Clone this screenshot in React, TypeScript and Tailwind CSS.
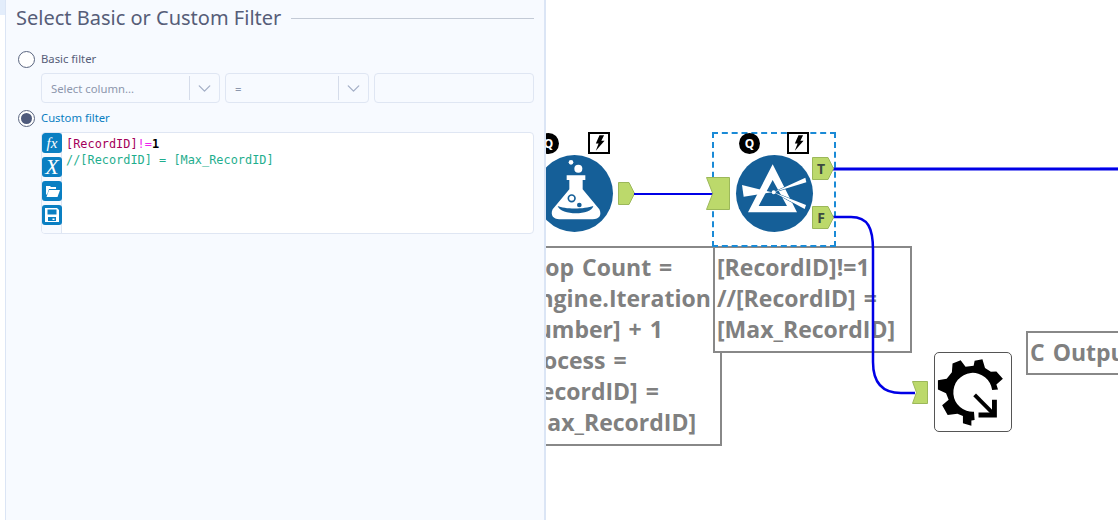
import { ChevronDown } from "lucide-react";
import type { ReactNode } from "react";

function Radio({ on }: { on?: boolean }) {
  return (
    <span className="flex h-[17px] w-[17px] items-center justify-center rounded-full border border-[#5a6580] bg-white">
      {on && <span className="h-[11px] w-[11px] rounded-full bg-[#4f5b7c]" />}
    </span>
  );
}

function Select({ label, className }: { label: string; className: string }) {
  return (
    <div className={`flex h-[30px] items-center rounded border border-[#dfe6f3] ${className}`}>
      <span className="flex-1 pl-[9px] pt-[2px] text-[11.3px] text-[#8d97ad]">{label}</span>
      <span className="h-[24px] w-px bg-[#d5dcea]" />
      <span className="flex w-[29px] justify-center text-[#a3aec6]">
        <ChevronDown size={21} strokeWidth={1.5} />
      </span>
    </div>
  );
}

function ToolBtn({ children }: { children: ReactNode }) {
  return (
    <div className="flex h-[20px] w-[20px] items-center justify-center rounded-[3px] bg-[#0a7fc2] text-white">
      {children}
    </div>
  );
}

function FilterPanel() {
  return (
    <aside className="z-10 flex h-full w-[546px] shrink-0 border-r-2 border-[#dbe5f5] bg-white">
      <div className="w-[5px] shrink-0">
        <div className="h-[15px] bg-[#e3edfb]" />
      </div>
      <div className="h-full flex-1 border-l border-[#dbe5f5] bg-[#f7faff] pl-[10px] pr-[10px] font-['Noto_Sans',sans-serif]">
        <div className="flex h-[36px] items-center gap-[10px]">
          <h1 className="text-[20px] leading-none text-[#565d78]">Select Basic or Custom Filter</h1>
          <span className="h-px flex-1 bg-[#c3cad6]" />
        </div>
        <div className="mt-[14px] flex h-[18px] items-center gap-[6px] pl-[2px]">
          <Radio />
          <span className="text-[11.3px] text-[#565d78]">Basic filter</span>
        </div>
        <div className="mt-[5px] flex gap-[5px] pl-[25px]">
          <Select label="Select column..." className="w-[179px]" />
          <Select label="=" className="w-[144px]" />
          <div className="h-[30px] flex-1 rounded border border-[#dfe6f3]" />
        </div>
        <div className="mt-[6px] flex h-[18px] items-center gap-[6px] pl-[2px]">
          <Radio on />
          <span className="text-[11.3px] text-[#0a7fc2]">Custom filter</span>
        </div>
        <div className="ml-[25px] mt-[5px] flex h-[102px] overflow-hidden rounded border border-[#dfe6f3] bg-white">
          <div className="flex w-[20px] shrink-0 flex-col gap-[4px] border-r border-[#dfe6f3] bg-[#f7faff]">
            <ToolBtn>
              <span className="font-['Liberation_Serif',serif] text-[15px] italic leading-none">fx</span>
            </ToolBtn>
            <ToolBtn>
              <span className="font-['Liberation_Serif',serif] text-[22px] italic leading-none">X</span>
            </ToolBtn>
            <ToolBtn>
              <svg width="15" height="13" viewBox="0 0 15 13" fill="currentColor">
                <path d="M1 1h4l1 1h5v2H4L2 10 1 9z" />
                <path d="M4 5h11l-2.5 7H1.5z" />
              </svg>
            </ToolBtn>
            <ToolBtn>
              <svg width="16" height="16" viewBox="0 0 16 16" fill="currentColor">
                <path d="M1 1h12l2 2v12H1zM3.5 2.5v5h9v-5zM4 10v4h8v-4z" fillRule="evenodd" />
                <path d="M8.5 11.5h2v1.5h-2z" />
              </svg>
            </ToolBtn>
          </div>
          <pre className="pl-[4px] pt-[3px] font-['DejaVu_Sans_Mono',monospace] text-[11.9px] leading-[16px]">
            <span className="text-[#a4005a]">[RecordID]</span>
            <span className="text-[#ee22ee]">!=</span>
            <span className="font-bold text-black">1</span>
            {"\n"}
            <span className="text-[#1fae8e]">//[RecordID] = [Max_RecordID]</span>
          </pre>
        </div>
      </div>
    </aside>
  );
}

function Badges({ left, right }: { left: number; right: number }) {
  return (
    <>
      <div
        className="absolute top-[133px] flex h-[21px] w-[21px] items-center justify-center rounded-full bg-black font-['Noto_Sans',sans-serif] text-[12px] font-bold text-white"
        style={{ left }}
      >
        Q
      </div>
      <div
        className="absolute top-[132px] flex h-[22px] w-[22px] items-center justify-center border-2 border-black bg-white"
        style={{ left: right }}
      >
        <svg width="11" height="16" viewBox="0 0 12 17" fill="black">
          <path d="M6 0h5L8 6h3.5L2 17l3-8H2z" />
        </svg>
      </div>
    </>
  );
}

function OutAnchor({ left, top, w, h, label }: { left: number; top: number; w: number; h: number; label?: string }) {
  return (
    <svg className="absolute" style={{ left, top }} width={w} height={h} viewBox={`0 0 ${w} ${h}`}>
      <path d={`M0.5 0.5H${w - 6}L${w - 0.5} ${h / 2}L${w - 6} ${h - 0.5}H0.5z`} fill="#bcd96b" stroke="#9cb85a" />
      {label && (
        <text x="9" y="17" textAnchor="middle" fontSize="14" fontWeight="700" fill="#3c4a40" fontFamily="Noto Sans, sans-serif">
          {label}
        </text>
      )}
    </svg>
  );
}

function InAnchor({ left, top, w, h }: { left: number; top: number; w: number; h: number }) {
  return (
    <svg className="absolute" style={{ left, top }} width={w} height={h} viewBox={`0 0 ${w} ${h}`}>
      <path d={`M0.5 0.5H${w - 0.5}V${h - 0.5}H0.5L${w * 0.28} ${h / 2}z`} fill="#bcd96b" stroke="#9cb85a" />
    </svg>
  );
}

function Note({ className, lines }: { className: string; lines: string[] }) {
  return (
    <div className={`absolute border-2 border-[#888888] font-['Open_Sans',sans-serif] text-[23px] font-bold leading-[31px] text-[#808080] [word-spacing:2px] ${className}`}>
      {lines.map((l) => (
        <div key={l} className="whitespace-pre">
          {l}
        </div>
      ))}
    </div>
  );
}

function Canvas() {
  return (
    <main className="relative h-full flex-1 overflow-hidden bg-white">
      {/* coordinates below are offset by the 546px panel */}
      <Note
        className="left-[-32px] top-[246px] h-[200px] w-[208px] pl-[2px] pt-[4px]"
        lines={["Loop Count =", "[Engine.Iteration", "Number] + 1", "Process =", "[RecordID] =", "[Max_RecordID]"]}
      />
      <Note
        className="left-[167px] top-[246px] h-[107px] w-[199px] bg-white pl-[2px] pt-[4px]"
        lines={["[RecordID]!=1", "//[RecordID] =", "[Max_RecordID]"]}
      />
      <Note className="left-[480px] top-[331px] h-[44px] w-[200px] pl-[2px] pt-[4px]" lines={["C Output"]} />

      <Badges left={-8} right={42} />
      <div className="absolute left-[-10px] top-[155px] h-[77px] w-[77px] rounded-full bg-[#155f98]">
        <svg viewBox="-30 15 231 231" className="h-full w-full">
          <circle cx="75" cy="37" r="7" fill="white" />
          <circle cx="97" cy="56" r="12" fill="white" />
          <path d="M62 76H118V90H110V118L160 178C168 195 160 208 140 208H40C22 208 12 195 20 178L70 118V90H62z" fill="white" />
          <path d="M35 168C55 178 115 178 142 168C135 197 45 197 35 168z" fill="#155f98" />
          <circle cx="77" cy="145" r="10" fill="white" stroke="#155f98" strokeWidth="5" />
          <circle cx="100" cy="165" r="7" fill="#155f98" />
        </svg>
      </div>
      <OutAnchor left={72} top={182} w={17} h={23} />

      <div className="absolute left-[166px] top-[132px] h-[115px] w-[124px] border-2 border-dashed border-[#1a8ad6]" />

      <svg className="absolute left-0 top-0" width="572" height="400" fill="none">
        <path d="M88 194H167" stroke="#0000e6" strokeWidth="2" />
        <path d="M287 169H572" stroke="#0000e6" strokeWidth="3" />
        <path d="M554 167.5H572" stroke="#6666ff" strokeWidth="1" />
        <path d="M287 217H305C322 217 327 228 327 250V362C327 385 338 393 355 393H369" stroke="#0000e6" strokeWidth="2.5" />
      </svg>

      <InAnchor left={160} top={177} w={24} h={33} />
      <Badges left={193} right={241} />
      <div className="absolute left-[190px] top-[155px] h-[77px] w-[77px] rounded-full bg-[#155f98]">
        <svg viewBox="12 10 231 231" className="h-full w-full">
          <path d="M122 38L195 182H48zM122 85L80 163H165z" fill="white" fillRule="evenodd" />
          <path d="M30 100L120 122L35 135z" fill="white" />
          <path d="M125 122L220 78L223 92z" fill="white" stroke="#155f98" strokeWidth="3" paintOrder="stroke" />
          <path d="M125 122L222 160L218 172z" fill="white" stroke="#155f98" strokeWidth="3" paintOrder="stroke" />
          <circle cx="125" cy="122" r="6" fill="white" />
        </svg>
      </div>
      <OutAnchor left={266} top={157} w={22} h={23} label="T" />
      <OutAnchor left={266} top={206} w={22} h={23} label="F" />

      <InAnchor left={366} top={381} w={16} h={23} />
      <div className="absolute left-[388px] top-[352px] h-[80px] w-[78px] rounded-[5px] border border-[#555555]">
        <svg viewBox="6 6 234 240" className="h-full w-full" fill="none">
          <path
            d="M60 38L85 28L100 48L125 45L128 30L152 25L160 52L178 64L195 63L215 85L195 103L200 118L182 120A60 60 0 1 0 126 187L128 212L118 214L118 230L92 222L92 200L75 193L45 197L28 167L48 150L40 130L15 118L15 90L42 85L58 65z"
            fill="black"
          />
          <path d="M128 135L190 197" stroke="black" strokeWidth="12" />
          <path d="M189 150V197H140" stroke="black" strokeWidth="15" />
        </svg>
      </div>
    </main>
  );
}

export default function App() {
  return (
    <div className="flex h-[520px] w-[1118px] overflow-hidden bg-white">
      <FilterPanel />
      <Canvas />
    </div>
  );
}
